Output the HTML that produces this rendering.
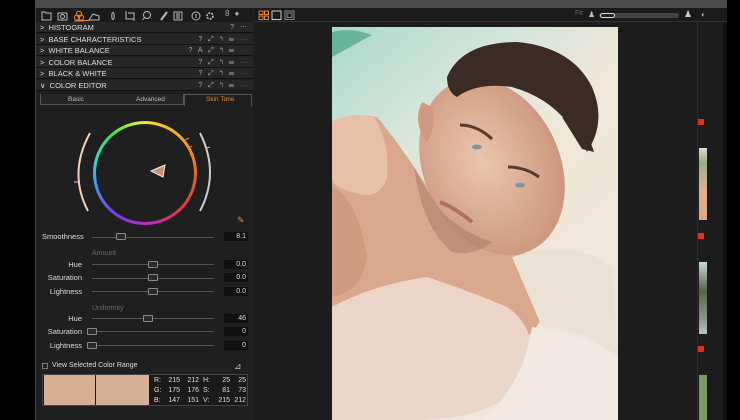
<!DOCTYPE html>
<html><head><meta charset="utf-8"><style>
*{margin:0;padding:0;box-sizing:border-box}
body{width:740px;height:420px;background:#000;position:relative;overflow:hidden;font-family:"Liberation Sans",sans-serif;color:#ddd}
.abs{position:absolute}
.hdr{position:absolute;left:36px;width:217px;height:11px;background:#262626;border-bottom:1px solid #111;font-size:7.5px;line-height:11px;color:#ddd;padding-left:4px}
.hdr .r{position:absolute;right:4px;top:0;color:#aaa;font-size:7px;letter-spacing:2px}
.lbl{position:absolute;font-size:7.5px;color:#ddd;text-align:right;width:48px;left:34px}
.trk{position:absolute;left:92px;width:122px;height:1px;background:#555}
.knob{position:absolute;width:10px;height:7px;border:1px solid #888;border-radius:1px;background:#2a2a2a}
.val{position:absolute;left:224px;width:24px;height:9px;background:#111;font-size:7px;line-height:9px;text-align:right;padding-right:2px;color:#ddd}
.sec{position:absolute;left:92px;font-size:7px;color:#666}
.num{position:absolute;font-size:7px;color:#ddd;text-align:right;line-height:10px}
</style></head><body>
<div class="abs" style="left:35px;top:0;width:692px;height:8px;background:#4b4b4b"></div>
<div class="abs" style="left:35px;top:8px;width:219px;height:412px;background:#1f1f1f;border-left:1px solid #444"></div>
<div class="abs" style="left:36px;top:8px;width:217px;height:14px;background:#1a1a1a"></div>
<svg class="abs" style="left:40px;top:9px" width="175" height="13" viewBox="0 0 175 13" fill="none" stroke="#bbb" stroke-width="1">
<path d="M2 3h3l1 1h5v7H2z"/><rect x="18" y="4" width="9" height="7"/><circle cx="22.5" cy="7.5" r="2"/>
<g stroke="#e8842c"><circle cx="39" cy="5" r="2.6"/><circle cx="37" cy="8.5" r="2.6"/><circle cx="41" cy="8.5" r="2.6"/><path d="M34 12h10"/></g>
<path d="M49 11l4-6 6 2v4z"/><ellipse cx="73" cy="7" rx="1.2" ry="3.5"/><path d="M86 2v8h8M88 4h6v8"/>
<circle cx="107" cy="6" r="3.5"/><path d="M104.5 8.5l-2 2.5"/><path d="M121 11l6-8" stroke-width="2"/>
<rect x="134" y="3" width="8" height="8"/><path d="M136 5h4M136 7h4M136 9h4"/><circle cx="156" cy="7" r="4"/><path d="M156 5v4"/>
<circle cx="170" cy="7" r="3" stroke-dasharray="2 1" stroke-width="1.6"/>
</svg>
<div class="abs" style="left:225px;top:9px;font-size:8px;color:#aaa">8<span style="margin-left:5px">&#9679;</span></div>
<div class="abs" style="left:76px;top:20px;width:14px;height:1px;background:#e8842c"></div>
<div class="hdr" style="top:22px">&gt;&nbsp; HISTOGRAM<span class="r">? ⋯</span></div>
<div class="hdr" style="top:34px">&gt;&nbsp; BASE CHARACTERISTICS<span class="r">? ⤢ ↰ ☰ ⋯</span></div>
<div class="hdr" style="top:45px">&gt;&nbsp; WHITE BALANCE<span class="r">? A ⤢ ↰ ☰ ⋯</span></div>
<div class="hdr" style="top:57px">&gt;&nbsp; COLOR BALANCE<span class="r">? ⤢ ↰ ☰ ⋯</span></div>
<div class="hdr" style="top:68px">&gt;&nbsp; BLACK &amp; WHITE<span class="r">? ⤢ ↰ ☰ ⋯</span></div>
<div class="hdr" style="top:80px">&#8744;&nbsp; COLOR EDITOR<span class="r">? ⤢ ↰ ☰ ⋯</span></div>
<div class="abs" style="left:40px;top:94px;width:144px;height:11px;border:1px solid #555;border-top:none;background:#262626"></div>
<div class="abs" style="left:184px;top:94px;width:68px;height:12px;border:1px solid #555;border-bottom:none;background:#1f1f1f"></div>
<div class="abs" style="left:68px;top:96px;font-size:6.5px;color:#bbb">Basic</div>
<div class="abs" style="left:136px;top:96px;font-size:6.5px;color:#bbb">Advanced</div>
<div class="abs" style="left:206px;top:96px;font-size:6.5px;color:#e8842c">Skin Tone</div>
<div class="abs" style="left:93px;top:121px;width:104px;height:104px;border-radius:50%;background:conic-gradient(#f4e42a,#f0a030 50deg,#e86020 95deg,#e23a40 130deg,#c428c0 175deg,#7a3af0 215deg,#3aa0f0 260deg,#30e0c0 285deg,#40e050 320deg,#b0f040 345deg,#f4e42a)"></div>
<div class="abs" style="left:96px;top:124px;width:98px;height:98px;border-radius:50%;background:#1f1f1f"></div>
<svg class="abs" style="left:70px;top:128px" width="150" height="100" fill="none">
<path d="M20 5 Q-2 45 18 83" stroke="#f0d0b8" stroke-width="2"/><path d="M4 54h6" stroke="#f0d0b8"/>
<path d="M130 5 Q150 45 130 83" stroke="#ccc" stroke-width="2"/><path d="M136 20l4-1" stroke="#ccc"/>
<path d="M115 12l4-2M118 20l4-2M120 27l4-1" stroke="#e8842c"/>
<path d="M81 43l14-6-2 12z" stroke="#eee" fill="#c89070"/>
</svg>
<div class="abs" style="left:237px;top:215px;font-size:9px;color:#e8842c">✎</div>
<div class="lbl" style="top:232px;text-align:left;left:42px">Smoothness</div>
<div class="trk" style="top:237px"></div><div class="knob" style="left:116px;top:233px"></div><div class="val" style="top:232px">8.1</div>
<div class="sec" style="top:250px">Amount</div>
<div class="lbl" style="top:260px">Hue</div><div class="trk" style="top:264px"></div><div class="knob" style="left:148px;top:261px"></div><div class="val" style="top:260px">0.0</div>
<div class="lbl" style="top:273px">Saturation</div><div class="trk" style="top:278px"></div><div class="knob" style="left:148px;top:274px"></div><div class="val" style="top:273px">0.0</div>
<div class="lbl" style="top:287px">Lightness</div><div class="trk" style="top:291px"></div><div class="knob" style="left:148px;top:288px"></div><div class="val" style="top:287px">0.0</div>
<div class="sec" style="top:305px">Uniformity</div>
<div class="lbl" style="top:314px">Hue</div><div class="trk" style="top:318px"></div><div class="knob" style="left:143px;top:315px"></div><div class="val" style="top:314px">46</div>
<div class="lbl" style="top:327px">Saturation</div><div class="trk" style="top:331px"></div><div class="knob" style="left:87px;top:328px"></div><div class="val" style="top:327px">0</div>
<div class="lbl" style="top:341px">Lightness</div><div class="trk" style="top:345px"></div><div class="knob" style="left:87px;top:342px"></div><div class="val" style="top:341px">0</div>
<div class="abs" style="left:42px;top:363px;width:6px;height:6px;border:1px solid #777"></div>
<div class="abs" style="left:52px;top:362px;font-size:7px;color:#ddd">View Selected Color Range</div>
<div class="abs" style="left:234px;top:361px;font-size:9px;color:#bbb">⊿</div>
<div class="abs" style="left:42px;top:374px;width:206px;height:32px;border:1px solid #444;background:#1a1a1a"></div>
<div class="abs" style="left:44px;top:375px;width:51px;height:30px;background:#d7af93"></div>
<div class="abs" style="left:96px;top:375px;width:53px;height:30px;background:#d4b097"></div>
<div class="num" style="left:154px;top:376px;text-align:left">R:<br>G:<br>B:</div>
<div class="num" style="left:164px;top:376px;width:16px">215<br>175<br>147</div>
<div class="num" style="left:183px;top:376px;width:16px">212<br>176<br>151</div>
<div class="num" style="left:203px;top:376px;text-align:left">H:<br>S:<br>V:</div>
<div class="num" style="left:214px;top:376px;width:16px">25<br>81<br>215</div>
<div class="num" style="left:230px;top:376px;width:16px">25<br>73<br>212</div>
<div class="abs" style="left:254px;top:8px;width:473px;height:412px;background:#1c1c1c"></div>
<div class="abs" style="left:254px;top:8px;width:473px;height:14px;background:#1a1a1a;border-bottom:1px solid #333"></div>
<svg class="abs" style="left:258px;top:10px" width="45" height="11" fill="none" stroke-width="1">
<g stroke="#e8842c"><rect x="1" y="1" width="4" height="3.5"/><rect x="6.5" y="1" width="4" height="3.5"/><rect x="1" y="6" width="4" height="3.5"/><rect x="6.5" y="6" width="4" height="3.5"/></g>
<rect x="14" y="1" width="9" height="8.5" stroke="#ccc"/><rect x="27" y="1" width="9" height="8.5" stroke="#888"/><rect x="29" y="3" width="5" height="4.5" stroke="#888"/>
</svg>
<div class="abs" style="left:575px;top:10px;font-size:7px;color:#666">Fit</div>
<div class="abs" style="left:588px;top:10px;font-size:8px;color:#bbb">♟</div>
<div class="abs" style="left:599px;top:13px;width:80px;height:5px;border-radius:3px;background:#444"></div>
<div class="abs" style="left:600px;top:13px;width:15px;height:5px;border-radius:3px;border:1px solid #ddd;background:#222"></div>
<div class="abs" style="left:684px;top:9px;font-size:9px;color:#ccc">♟</div>
<div class="abs" style="left:701px;top:10px;font-size:8px;color:#aaa">◐</div>
<div class="abs" style="left:723px;top:22px;width:4px;height:398px;background:#111"></div>
<div class="abs" style="left:697px;top:22px;width:1px;height:398px;background:#2c2c2c"></div>
<div class="abs" style="left:698px;top:119px;width:6px;height:6px;background:#e03020"></div>
<div class="abs" style="left:698px;top:233px;width:6px;height:6px;background:#e03020"></div>
<div class="abs" style="left:698px;top:346px;width:6px;height:6px;background:#e03020"></div>
<div class="abs" style="left:699px;top:148px;width:8px;height:72px;background:linear-gradient(#d8e0d0,#9aaa88 20%,#e0b090 60%,#d8a888)"></div>
<div class="abs" style="left:699px;top:262px;width:8px;height:72px;background:linear-gradient(#c8d8e0,#506840 40%,#8a9a88 80%,#b8c8c8)"></div>
<div class="abs" style="left:699px;top:375px;width:8px;height:45px;background:#7a9868"></div>
<!-- photo -->
<svg class="abs" style="left:332px;top:27px" width="286" height="393" viewBox="0 0 286 393">
<defs>
<linearGradient id="bg" x1="0" y1="0" x2="0.6" y2="1"><stop offset="0" stop-color="#a8d8cc"/><stop offset="0.3" stop-color="#d6e6da"/><stop offset="0.5" stop-color="#efe7d8"/><stop offset="1" stop-color="#f0e6da"/></linearGradient>
<radialGradient id="sk" cx="0.45" cy="0.45" r="0.65"><stop offset="0" stop-color="#ebc6ae"/><stop offset="1" stop-color="#c99078"/></radialGradient>
</defs>
<rect width="286" height="393" fill="url(#bg)"/>
<path d="M0 5 Q20 0 40 8 L0 30z" fill="#3a9a78" opacity=".6"/>
<!-- shoulders & arms -->
<path d="M0 95 Q15 85 45 90 Q70 120 95 160 Q120 200 150 215 Q200 225 225 240 Q220 290 190 315 Q120 320 60 290 Q20 270 0 280z" fill="#daa88e"/>
<path d="M0 95 Q15 85 42 90 Q58 115 55 150 Q48 175 20 165 Q0 160 0 150z" fill="#e6c0a8"/>
<path d="M0 160 Q25 170 35 230 Q30 265 0 270z" fill="#cf9a80"/>
<!-- water -->
<path d="M0 280 Q40 258 95 250 Q140 265 175 280 Q205 300 200 345 Q170 393 80 393 L0 393z" fill="#ecd6ca"/>
<path d="M180 230 Q240 210 280 240 L286 330 Q250 300 210 300z" fill="#ebe2d6"/>
<path d="M200 300 Q260 310 286 330 L286 393 L150 393 Q190 360 200 300z" fill="#f2e9e0"/>
<!-- face -->
<g transform="rotate(-25 160 140)">
<ellipse cx="160" cy="140" rx="68" ry="92" fill="url(#sk)"/>
</g>
<path d="M82 140 Q90 200 120 225 Q140 230 160 215 Q130 205 110 185 Q95 165 82 140z" fill="#a07464" opacity=".45"/>
<path d="M90 75 Q80 95 95 115 Q105 100 100 80z" fill="#d2987e"/>
<!-- hair -->
<path d="M115 50 Q130 15 185 15 Q240 20 260 60 Q275 95 255 125 Q245 105 235 95 Q215 70 180 60 Q145 55 125 70 Q115 65 115 50z" fill="#3b2b22"/>
<path d="M230 90 Q255 100 262 125 L250 122z" fill="#3b2b22"/>
<!-- brows / eyes / mouth -->
<path d="M128 98 Q145 98 160 112" stroke="#5a3a2a" stroke-width="3" fill="none"/>
<path d="M176 140 Q193 140 207 150" stroke="#5a3a2a" stroke-width="3" fill="none"/>
<ellipse cx="145" cy="120" rx="5" ry="2.5" fill="#7a9aa0"/><ellipse cx="188" cy="158" rx="5" ry="2.5" fill="#7a9aa0"/>
<path d="M108 175 Q125 182 140 195" stroke="#b07068" stroke-width="4" fill="none"/>
</svg>
</body></html>
